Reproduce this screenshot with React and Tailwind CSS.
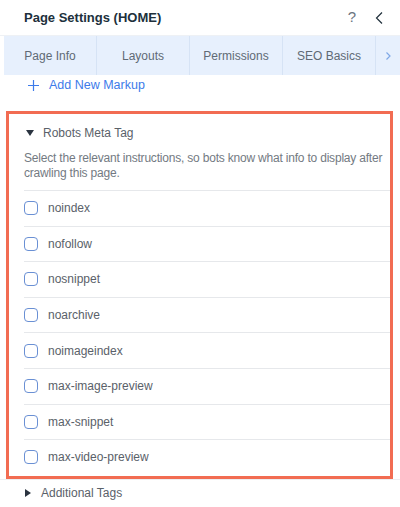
import React, { useState } from 'react';

const TAGS = [
  'noindex',
  'nofollow',
  'nosnippet',
  'noarchive',
  'noimageindex',
  'max-image-preview',
  'max-snippet',
  'max-video-preview',
];

const TABS = ['Page Info', 'Layouts', 'Permissions', 'SEO Basics'];

const App = () => {
  const [checked, setChecked] = useState({});

  const toggle = (tag) => setChecked((c) => ({ ...c, [tag]: !c[tag] }));

  return (
    <div className="w-[400px] h-[507px] overflow-hidden bg-white text-[#3b4057] font-['Liberation_Sans',Arial,sans-serif]">
      {/* header */}
      <div className="h-[36px] flex items-center pl-[24px] pr-[16px] border-b border-[#eef1f5]">
        <h1 className="flex-1 text-[13px] font-bold text-[#20303c]">Page Settings (HOME)</h1>
        <span className="text-[15px] text-[#6b7580] mr-[18px]">?</span>
        <svg width="10" height="14" viewBox="0 0 10 14" className="text-[#20303c]">
          <path d="M8 1.5 L2.5 7 L8 12.5" fill="none" stroke="currentColor" strokeWidth="1.2" />
        </svg>
      </div>

      {/* tabs */}
      <div className="ml-[4px] h-[39px] flex bg-[#e7f0fd] text-[12px] text-[#606a75]">
        {TABS.map((t) => (
          <div key={t} className="w-[93px] flex items-center justify-center border-r border-[#d6e3f5]">
            {t}
          </div>
        ))}
        <div className="flex-1 flex items-center justify-center text-[#7fa8e6]">
          <svg width="7" height="10" viewBox="0 0 7 10">
            <path d="M1.5 1.5 L5 5 L1.5 8.5" fill="none" stroke="currentColor" strokeWidth="1.2" />
          </svg>
        </div>
      </div>

      {/* add markup */}
      <div className="h-[20px] flex items-center pl-[28px] text-[#3d7bea] text-[12.5px]">
        <svg width="11" height="11" viewBox="0 0 11 11" className="mr-[10px]">
          <path d="M5.5 0 V11 M0 5.5 H11" stroke="currentColor" strokeWidth="1.2" />
        </svg>
        Add New Markup
      </div>

      <div className="h-[16px]" />

      {/* robots meta tag section (highlighted) */}
      <div className="ml-[6px] w-[387px] pb-[1px] border-[3px] border-[#f26c52]">
        <div className="h-[37px] flex items-center pl-[17px] text-[12px] text-[#5a6169]">
          <svg width="8" height="6" viewBox="0 0 8 6" className="mr-[9px]">
            <path d="M0 0 H8 L4 6 Z" fill="#2b3440" />
          </svg>
          Robots Meta Tag
        </div>
        <p className="pl-[15px] pr-0 text-[12px] leading-[15px] tracking-[-0.2px] text-[#737a82]">
          Select the relevant instructions, so bots know what info to display after crawling this page.
        </p>
        <div className="mt-[9px] ml-[15px]">
          {TAGS.map((tag) => (
            <label
              key={tag}
              className="h-[35.6px] flex items-center border-t border-[#e6e8eb] cursor-pointer text-[12px] text-[#5a6169]"
            >
              <span
                onClick={() => toggle(tag)}
                className={`w-[14px] h-[14px] rounded-[4px] border border-[#6a90d4] mr-[10px] ${
                  checked[tag] ? 'bg-[#3d7bea]' : 'bg-white'
                }`}
              />
              {tag}
            </label>
          ))}
        </div>
      </div>

      {/* additional tags */}
      <div className="h-[28px] flex items-center pl-[25px] text-[12px] text-[#5a6169] border-t border-[#eceef1]">
        <svg width="6" height="8" viewBox="0 0 6 8" className="mr-[10px]">
          <path d="M0 0 V8 L6 4 Z" fill="#2b3440" />
        </svg>
        Additional Tags
      </div>
    </div>
  );
};

export default App;
